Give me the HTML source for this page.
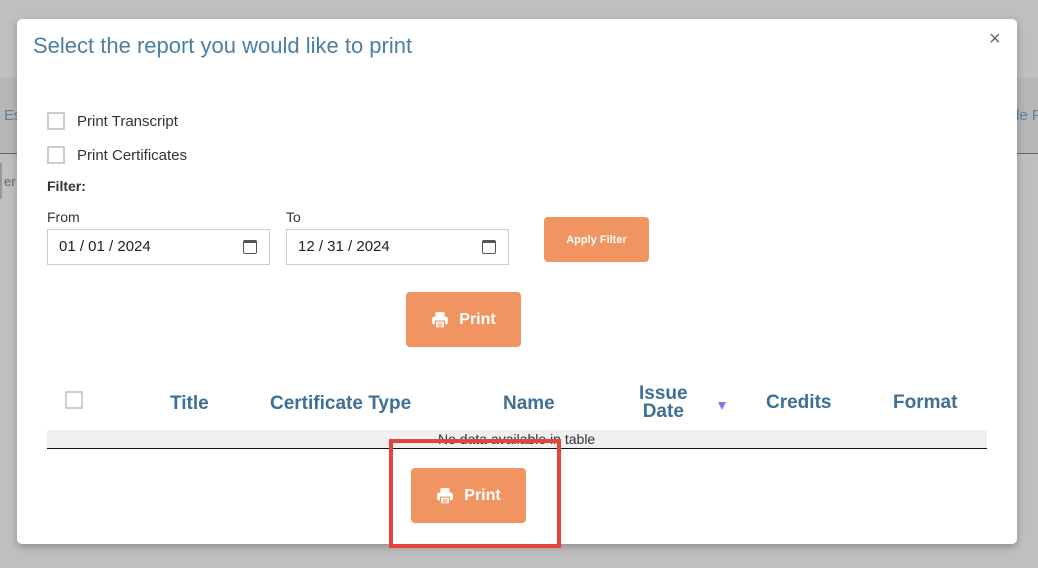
<!DOCTYPE html>
<html><head><meta charset="utf-8"><style>
*{box-sizing:border-box;margin:0;padding:0}
body{width:1038px;height:568px;background:#bfbfbf;position:relative;overflow:hidden;font-family:"Liberation Sans Narrow","Liberation Sans",sans-serif;}
.band{position:absolute;left:0;top:78px;width:1038px;height:76px;background:#b6b6b6;border-bottom:1px solid #666}
.bgt{position:absolute;font-size:15px;color:#5f7f99;white-space:nowrap}
.modal{position:absolute;left:17px;top:19px;width:1000px;height:525px;background:#fff;border-radius:5px;box-shadow:0 3px 8px rgba(0,0,0,.25)}
.abs{position:absolute}
h1{position:absolute;left:16px;top:14px;font-family:"Liberation Sans",sans-serif;font-weight:normal;font-size:22px;color:#4a7fa6;white-space:nowrap}
.x{position:absolute;left:972px;top:9px;font-size:20px;color:#666;font-family:"Liberation Sans",sans-serif}
.cb{position:absolute;width:18px;height:18px;border:2px solid #ccc;background:#fff}
.lbl{position:absolute;font-size:15px;color:#333;white-space:nowrap}
.inp{position:absolute;width:223px;height:36px;border:1px solid #ccc;font-size:15px;color:#222;padding:8px 0 0 11px}
.cal{position:absolute;right:12px;top:10px;width:14px;height:14px;border:1.5px solid #555;border-top-width:3px;border-radius:2px}
.btn{position:absolute;background:#f09462;border-radius:4px;color:#fff;font-weight:bold;display:flex;align-items:center;justify-content:center}
.th{position:absolute;font-weight:bold;font-size:19px;color:#3f6f94;text-align:center;line-height:18px;white-space:nowrap}
</style></head><body>
<div class="band"></div>
<div class="bgt" style="left:4px;top:107px">Es</div>
<div class="bgt" style="left:1016px;top:107px">le P</div>
<div class="abs" style="left:0;top:163px;width:2px;height:36px;background:#999"></div>
<div class="bgt" style="left:4px;top:174px;font-size:13px;color:#666">er</div>
<div class="modal">
<h1>Select the report you would like to print</h1>
<div class="x">×</div>
<div class="cb" style="left:30px;top:93px"></div><div class="lbl" style="left:60px;top:94px">Print Transcript</div>
<div class="cb" style="left:30px;top:127px"></div><div class="lbl" style="left:60px;top:128px">Print Certificates</div>
<div class="lbl" style="left:30px;top:159px;font-weight:bold;font-size:14px">Filter:</div>
<div class="lbl" style="left:30px;top:190px;font-size:14px">From</div>
<div class="lbl" style="left:269px;top:190px;font-size:14px">To</div>
<div class="inp" style="left:30px;top:210px">01 / 01 / 2024<div class="cal"></div></div>
<div class="inp" style="left:269px;top:210px">12 / 31 / 2024<div class="cal"></div></div>
<div class="btn" style="left:527px;top:198px;width:105px;height:45px;font-size:11px">Apply Filter</div>
<div class="btn" style="left:389px;top:273px;width:115px;height:55px;font-size:16px"><svg width="18" height="18" viewBox="0 0 16 16" style="margin-right:10px"><rect x="4" y="1" width="8" height="4" fill="#fff"/><rect x="1" y="5" width="14" height="7" rx="2" fill="#fff"/><rect x="4" y="9" width="8" height="6" fill="#fff" stroke="#f09462" stroke-width="1"/><path d="M6 11.5h4M6 13.3h4" stroke="#f09462" stroke-width="1"/></svg>Print</div>
<div class="cb" style="left:48px;top:372px"></div>
<div class="th" style="left:153px;top:376px">Title</div>
<div class="th" style="left:253px;top:376px">Certificate Type</div>
<div class="th" style="left:486px;top:376px">Name</div>
<div class="th" style="left:622px;top:366px">Issue<br>Date</div>
<div class="abs" style="left:701px;top:383px;width:0;height:0;border-left:4px solid transparent;border-right:4px solid transparent;border-top:8px solid #7a7adf"></div>
<div class="th" style="left:749px;top:375px">Credits</div>
<div class="th" style="left:876px;top:375px">Format</div>
<div class="abs" style="left:30px;top:411px;width:940px;height:19px;background:#f0f0f0;border-bottom:1px solid #111"></div>
<div class="lbl" style="left:421px;top:412px;font-size:14px">No data available in table</div>
<div class="btn" style="left:394px;top:449px;width:115px;height:55px;font-size:16px"><svg width="18" height="18" viewBox="0 0 16 16" style="margin-right:10px"><rect x="4" y="1" width="8" height="4" fill="#fff"/><rect x="1" y="5" width="14" height="7" rx="2" fill="#fff"/><rect x="4" y="9" width="8" height="6" fill="#fff" stroke="#f09462" stroke-width="1"/><path d="M6 11.5h4M6 13.3h4" stroke="#f09462" stroke-width="1"/></svg>Print</div>
</div>
<div class="abs" style="left:389px;top:439px;width:172px;height:109px;border:4px solid #e5443d"></div>
</body></html>
